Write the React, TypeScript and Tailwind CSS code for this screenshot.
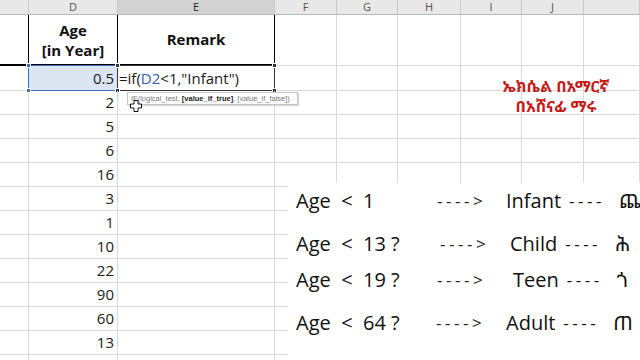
import React from "react";

const cols = [29, 89, 157, 62, 61, 63, 61, 62, 56];
const letters = ["", "D", "E", "F", "G", "H", "I", "J", ""];
const nums = ["0.5", "2", "5", "6", "16", "3", "1", "10", "22", "90", "60", "13", ""];

const sheetFont = { fontFamily: "'Open Sans', 'Noto Sans', sans-serif" };
const ethFont = "'Noto Sans Ethiopic', 'Abyssinica SIL', 'DejaVu Sans', 'Noto Sans', sans-serif";

function Corners({ color }: { color: string }) {
  return (
    <>
      <span className={`absolute -left-[3px] -top-[3px] w-[5px] h-[5px] border border-white ${color}`} />
      <span className={`absolute -right-[3px] -top-[3px] w-[5px] h-[5px] border border-white ${color}`} />
      <span className={`absolute -left-[3px] -bottom-[3px] w-[5px] h-[5px] border border-white ${color}`} />
      <span className={`absolute -right-[3px] -bottom-[3px] w-[5px] h-[5px] border border-white ${color}`} />
    </>
  );
}

function HeaderRow() {
  return (
    <>
      {cols.map((_, c) => (
        <div
          key={`h${c}`}
          className={`flex items-center justify-center border-r border-b border-r-[#c8c8c8] border-b-[#b8b8b8] text-[11px] leading-[14px] ${
            c === 2 ? "bg-[#d3d3d3] text-[#262626]" : "bg-[#e8e8e8] text-[#555]"
          }`}
        >
          {letters[c]}
        </div>
      ))}
    </>
  );
}

function TitleRow() {
  return (
    <>
      <div className="border-r border-r-black border-b-2 border-b-black" />
      <div className="flex flex-col items-center justify-center border-r border-r-black border-b-2 border-b-black text-[15px] font-bold leading-[20px] text-[#111]">
        <span>Age</span>
        <span>[in Year]</span>
      </div>
      <div className="flex items-center justify-center border-r border-r-black border-b-2 border-b-black text-[15px] font-bold text-[#111]">
        Remark
      </div>
      {cols.slice(3).map((_, i) => (
        <div key={`t${i}`} className="border-r border-b border-[#dadada]" />
      ))}
    </>
  );
}

function DataRow({ idx }: { idx: number }) {
  const v = nums[idx];
  return (
    <>
      <div className={`border-b border-[#dadada] ${idx === 0 ? "border-r border-r-black" : "border-r"}`} />
      <div
        className={`relative flex items-center justify-end pr-[3px] border-r border-b border-[#dadada] text-[15px] text-[#1a1a1a] ${
          idx === 0 ? "bg-[#dce6f3]" : ""
        }`}
      >
        {v}
        {idx === 0 && (
          <div className="absolute -left-[1px] -top-[1px] -right-[1px] -bottom-[1px] border-[1.5px] border-[#3c6cc0]">
            <Corners color="bg-[#3c6cc0]" />
          </div>
        )}
      </div>
      <div
        className={`relative flex items-center pl-[1px] border-r border-b text-[15px] text-[#1a1a1a] ${
          idx === 0 ? "border-r-black border-[#dadada]" : "border-[#dadada]"
        }`}
      >
        {idx === 0 && (
          <>
            <span>
              =if(<span className="text-[#2f5fb3]">D2</span>&lt;1,"Infant")
            </span>
            <div className="absolute -left-[1px] -top-[1px] -right-[1px] -bottom-[1px] border-[1.5px] border-[#333]">
              <Corners color="bg-[#333]" />
            </div>
          </>
        )}
      </div>
      {cols.slice(3).map((_, i) => (
        <div key={`d${idx}-${i}`} className="border-r border-b border-[#dadada]" />
      ))}
    </>
  );
}

function Rule({
  left,
  arrowPl,
  word,
  wordPl,
  glyph,
  mt,
}: {
  left: string;
  arrowPl: number;
  word: string;
  wordPl: number;
  glyph: string;
  mt: number;
}) {
  return (
    <div className="grid grid-cols-[141px_77px_1fr] items-center h-[36px]" style={{ marginTop: mt }}>
      <span className="pl-[8px] text-[20px] text-[#111] whitespace-pre">{left}</span>
      <span className="text-[17px] text-[#222] tracking-[3.5px] whitespace-nowrap" style={{ paddingLeft: arrowPl }}>
        ----&gt;
      </span>
      <span className="flex items-center text-[20px] text-[#111] whitespace-nowrap" style={{ paddingLeft: wordPl }}>
        <span>{word}</span>
        <span className="ml-[8px] text-[17px] tracking-[3.5px]">----</span>
        <span className="ml-[14px] text-[20px]" style={{ fontFamily: ethFont }}>
          {glyph}
        </span>
      </span>
    </div>
  );
}

export default function App() {
  return (
    <div className="relative w-[640px] h-[360px] overflow-hidden bg-white" style={sheetFont}>
      <div className="grid grid-cols-[29px_89px_157px_62px_61px_63px_61px_62px_56px] grid-rows-[15px_51px_25px_repeat(11,24px)_24px]">
        <HeaderRow />
        <TitleRow />
        {nums.map((_, i) => (
          <DataRow key={i} idx={i} />
        ))}
      </div>

      {/* function tooltip */}
      <div
        className="absolute left-[127px] top-[92px] h-[13px] w-[171px] flex items-center px-[3px] bg-white border border-[#c6c6c6] text-[7.5px] leading-none text-[#777] whitespace-nowrap shadow-[1px_1px_1px_rgba(0,0,0,0.15)]"
        style={{ fontFamily: "'Liberation Sans', sans-serif" }}
      >
        IF(logical_test,&nbsp;<span className="font-bold text-[#222]">[value_if_true]</span>, [value_if_false])
      </div>

      {/* cursor */}
      <svg className="absolute left-[130px] top-[100px]" width="12" height="12" viewBox="0 0 12 12">
        <path
          d="M4 0.5h4v3.5h3.5v4H8v3.5H4V8H0.5V4H4z"
          fill="#fff"
          stroke="#111"
          strokeWidth="1"
        />
      </svg>

      {/* red title */}
      <div
        className="absolute left-[486px] top-[76px] w-[140px] text-center text-[16px] font-bold leading-[20px] text-[#c61a1a]"
        style={{ fontFamily: ethFont }}
      >
        <div>ኤክሴል በአማርኛ</div>
        <div>በአሸናፊ ማሩ</div>
      </div>

      {/* white notes panel */}
      <div className="absolute left-[288px] top-[183px] right-0 bottom-0 bg-white flex flex-col">
        <Rule left="Age  <  1" arrowPl={8} word="Infant" wordPl={0} glyph="ጨ" mt={0} />
        <Rule left="Age  <  13 ?" arrowPl={11} word="Child" wordPl={4} glyph="ሕ" mt={7} />
        <Rule left="Age  <  19 ?" arrowPl={8} word="Teen" wordPl={7} glyph="ጎ" mt={0} />
        <Rule left="Age  <  64 ?" arrowPl={7} word="Adult" wordPl={0} glyph="ጠ" mt={7} />
      </div>
    </div>
  );
}
